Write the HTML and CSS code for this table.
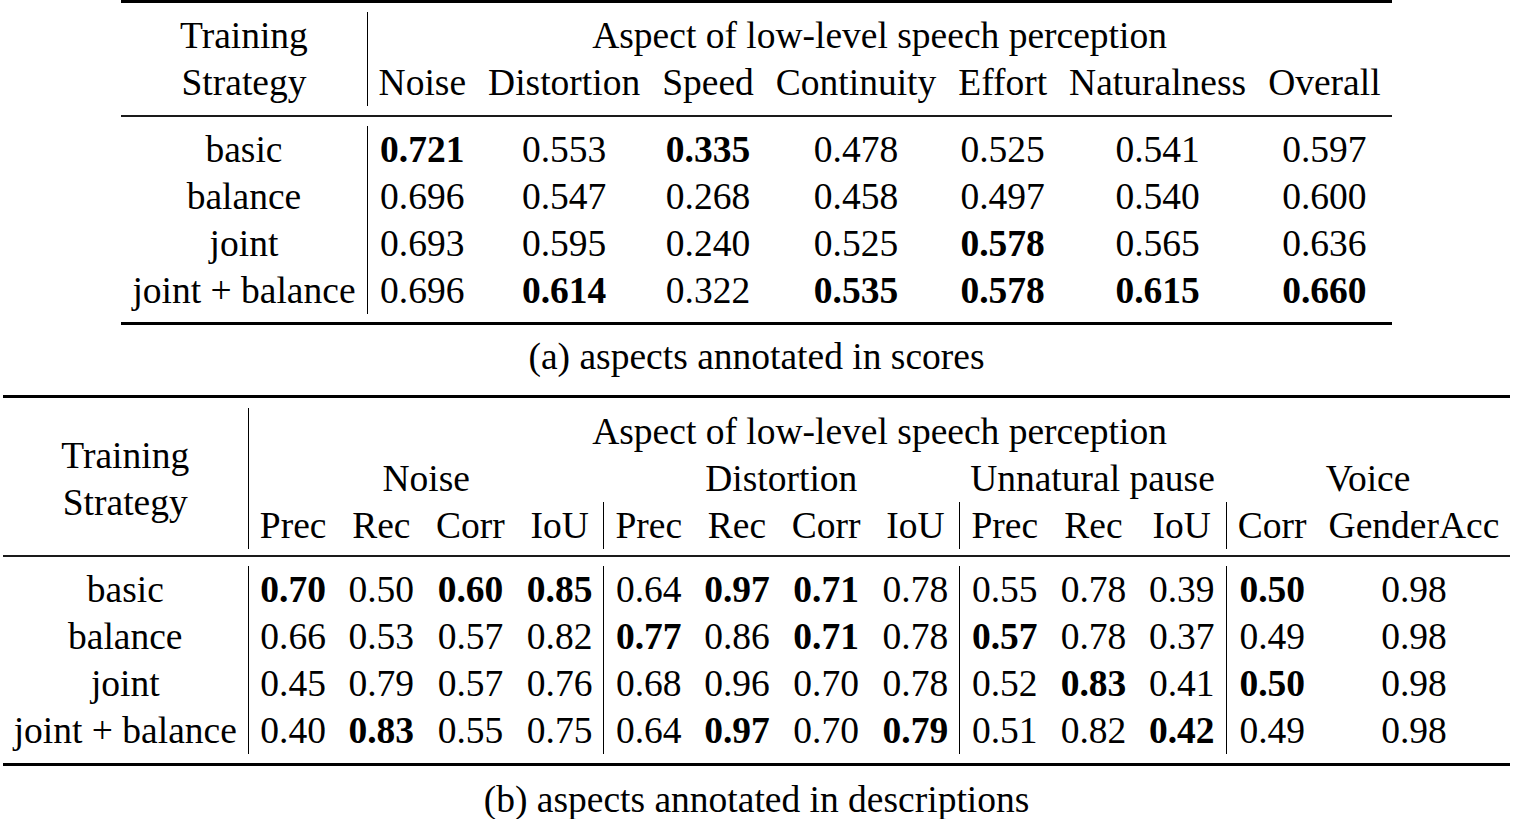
FILE: index.html
```html
<!DOCTYPE html>
<html>
<head>
<meta charset="utf-8">
<link rel="stylesheet" href="styles.css">
</head>
<body>
<table class="tbl tbl-a">
  <tr>
    <td class="sep">Training</td>
    <td colspan="7">Aspect of low-level speech perception</td>
  </tr>
  <tr>
    <td class="sep">Strategy</td>
    <td>Noise</td><td>Distortion</td><td>Speed</td><td>Continuity</td><td>Effort</td><td>Naturalness</td><td>Overall</td>
  </tr>
  <tr class="midrule"><td colspan="8"><div class="rule"></div></td></tr>
  <tr>
    <td class="sep">basic</td>
    <td><b>0.721</b></td><td>0.553</td><td><b>0.335</b></td><td>0.478</td><td>0.525</td><td>0.541</td><td>0.597</td>
  </tr>
  <tr>
    <td class="sep">balance</td>
    <td>0.696</td><td>0.547</td><td>0.268</td><td>0.458</td><td>0.497</td><td>0.540</td><td>0.600</td>
  </tr>
  <tr>
    <td class="sep">joint</td>
    <td>0.693</td><td>0.595</td><td>0.240</td><td>0.525</td><td><b>0.578</b></td><td>0.565</td><td>0.636</td>
  </tr>
  <tr>
    <td class="sep">joint + balance</td>
    <td>0.696</td><td><b>0.614</b></td><td>0.322</td><td><b>0.535</b></td><td><b>0.578</b></td><td><b>0.615</b></td><td><b>0.660</b></td>
  </tr>
</table>
<p class="caption caption-a">(a) aspects annotated in scores</p>

<table class="tbl tbl-b">
  <tr>
    <td class="sep" rowspan="3">Training<br>Strategy</td>
    <td colspan="13">Aspect of low-level speech perception</td>
  </tr>
  <tr>
    <td colspan="4">Noise</td>
    <td colspan="4">Distortion</td>
    <td colspan="3">Unnatural pause</td>
    <td colspan="2">Voice</td>
  </tr>
  <tr>
    <td>Prec</td><td>Rec</td><td>Corr</td><td>IoU</td>
    <td class="gl">Prec</td><td>Rec</td><td>Corr</td><td>IoU</td>
    <td class="gl">Prec</td><td>Rec</td><td>IoU</td>
    <td class="gl">Corr</td><td>GenderAcc</td>
  </tr>
  <tr class="midrule midrule-b"><td colspan="14"><div class="rule"></div></td></tr>
  <tr>
    <td class="sep">basic</td>
    <td><b>0.70</b></td><td>0.50</td><td><b>0.60</b></td><td><b>0.85</b></td>
    <td class="gl">0.64</td><td><b>0.97</b></td><td><b>0.71</b></td><td>0.78</td>
    <td class="gl">0.55</td><td>0.78</td><td>0.39</td>
    <td class="gl"><b>0.50</b></td><td>0.98</td>
  </tr>
  <tr>
    <td class="sep">balance</td>
    <td>0.66</td><td>0.53</td><td>0.57</td><td>0.82</td>
    <td class="gl"><b>0.77</b></td><td>0.86</td><td><b>0.71</b></td><td>0.78</td>
    <td class="gl"><b>0.57</b></td><td>0.78</td><td>0.37</td>
    <td class="gl">0.49</td><td>0.98</td>
  </tr>
  <tr>
    <td class="sep">joint</td>
    <td>0.45</td><td>0.79</td><td>0.57</td><td>0.76</td>
    <td class="gl">0.68</td><td>0.96</td><td>0.70</td><td>0.78</td>
    <td class="gl">0.52</td><td><b>0.83</b></td><td>0.41</td>
    <td class="gl"><b>0.50</b></td><td>0.98</td>
  </tr>
  <tr>
    <td class="sep">joint + balance</td>
    <td>0.40</td><td><b>0.83</b></td><td>0.55</td><td>0.75</td>
    <td class="gl">0.64</td><td><b>0.97</b></td><td>0.70</td><td><b>0.79</b></td>
    <td class="gl">0.51</td><td>0.82</td><td><b>0.42</b></td>
    <td class="gl">0.49</td><td>0.98</td>
  </tr>
</table>
<p class="caption caption-b">(b) aspects annotated in descriptions</p>
</body>
</html>
```
FILE: styles.css
```css
html, body {
  margin: 0;
  padding: 0;
  background: #fff;
}
body {
  font-family: "Liberation Serif", "Times New Roman", serif;
  font-size: 37.5px;
  color: #000;
}
.tbl {
  border-collapse: separate;
  border-spacing: 0;
  margin: 0 auto;
  border-top: 3px solid #000;
  border-bottom: 3px solid #000;
}
.tbl-a {
  padding: 9px 0 8px;
}
.tbl-b {
  padding: 10px 0 9px;
}
.tbl td {
  padding: 0 11px;
  line-height: 47px;
  text-align: center;
  white-space: nowrap;
  vertical-align: middle;
}
.tbl td.sep {
  border-right: 1.5px solid #000;
}
.tbl td.gl {
  border-left: 1.5px solid #000;
}
.tbl b {
  font-weight: bold;
}
.tbl tr.midrule td {
  padding: 9px 0;
  line-height: 0;
}
.tbl tr.midrule-b td {
  padding: 6px 0 9px;
}
.rule {
  height: 2px;
  background: #1a1a1a;
}
.caption {
  margin: 8px 0 0;
  text-align: center;
  line-height: 47px;
}
.caption-a {
  margin-bottom: 15px;
}
.caption-b {
  margin-top: 10px;
}
```
